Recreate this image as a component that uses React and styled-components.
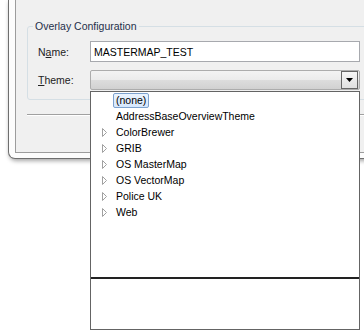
import React from "react";
import styled, { createGlobalStyle } from "styled-components";

const GlobalStyle = createGlobalStyle`
  html, body {
    margin: 0;
    padding: 0;
    background: #ffffff;
    font-family: "Liberation Sans", Arial, sans-serif;
  }
`;

const Page = styled.div`
  position: relative;
  width: 364px;
  height: 333px;
  overflow: hidden;
  background: #ffffff;
`;

const Window = styled.div`
  margin-left: 8px;
  width: 400px;
  border: 1px solid #6e6e6e;
  border-top: none;
  border-radius: 0 0 7px 7px;
  background: #fcfcfc;
  padding: 0 6px 5px 6px;
  box-shadow: 1px 2px 4px rgba(0, 0, 0, 0.35);
`;

const Content = styled.div`
  box-sizing: border-box;
  height: 153px;
  border-left: 1px solid #9c9c9c;
  border-bottom: 1px solid #9c9c9c;
  background: #f0f0f0;
  padding: 20px 0 0 11px;
`;

const GroupBox = styled.fieldset`
  margin: 0;
  width: 380px;
  min-width: 0;
  border: 1px solid #d5dfe5;
  border-radius: 3px;
  padding: 0 0 9px 0;
`;

const Caption = styled.legend`
  margin-left: 5px;
  padding: 0 2px;
  font-size: 10.5px;
  line-height: 13px;
  color: #1e2f4a;
`;

const FieldRow = styled.div`
  display: flex;
  align-items: center;
  padding-left: 10px;
  margin-top: ${(p) => p.$gap}px;
`;

const Label = styled.label`
  width: 52px;
  font-size: 10.5px;
  color: #222222;
`;

const Key = styled.span`
  text-decoration: underline;
`;

const TextBox = styled.div`
  box-sizing: border-box;
  width: 270px;
  height: 21px;
  border: 1px solid #a7a9ae;
  background: #ffffff;
  padding-left: 3px;
  display: flex;
  align-items: center;
  font-size: 10.5px;
  color: #000000;
`;

const Combo = styled.div`
  position: relative;
  box-sizing: border-box;
  width: 270px;
  height: 20px;
  border: 1px solid #acacac;
  border-radius: 2px;
  background: linear-gradient(#f3f3f3 0%, #ebebeb 50%, #dddddd 51%, #d1d1d1 100%);
  display: flex;
  justify-content: flex-end;
`;

const DropButton = styled.div`
  box-sizing: border-box;
  width: 17px;
  height: 18px;
  margin-right: 1px;
  border: 1px solid #666666;
  background: linear-gradient(#f6f6f6, #e0e0e0);
  display: flex;
  align-items: center;
  justify-content: center;
`;

const Separator = styled.div`
  margin-top: 14px;
  width: 400px;
  border-top: 1px solid #a0a0a0;
  border-bottom: 1px solid #ffffff;
`;

const DropList = styled.div`
  position: absolute;
  left: -1px;
  top: 20px;
  box-sizing: border-box;
  width: 270px;
  height: 239px;
  border: 1px solid #646464;
  background: #ffffff;
  display: flex;
  flex-direction: column;
  z-index: 2;
`;

const Tree = styled.div`
  flex: 1;
`;

const Description = styled.div`
  box-sizing: border-box;
  height: 52px;
  border-top: 2px solid #222222;
`;

const TreeRow = styled.div`
  display: flex;
  align-items: center;
  height: 16px;
  padding-left: 10px;
  font-size: 10.5px;
  color: #000000;
`;

const Expander = styled.span`
  width: 12px;
  height: 16px;
  display: flex;
  align-items: center;
  padding-left: 1px;
  box-sizing: border-box;
`;

const ItemText = styled.span`
  box-sizing: border-box;
  height: 15px;
  line-height: 13px;
  padding: 0 2px;
  border: 1px solid ${(p) => (p.$selected ? "#7da2ce" : "transparent")};
  border-radius: 2px;
  background: ${(p) =>
    p.$selected ? "linear-gradient(#ebf4fe, #d5e7fd)" : "transparent"};
`;

const items = [
  { name: "(none)", selected: true },
  { name: "AddressBaseOverviewTheme" },
  { name: "ColorBrewer", folder: true },
  { name: "GRIB", folder: true },
  { name: "OS MasterMap", folder: true },
  { name: "OS VectorMap", folder: true },
  { name: "Police UK", folder: true },
  { name: "Web", folder: true },
];

const Arrow = () => (
  <svg width="7" height="4" viewBox="0 0 7 4">
    <polygon points="0,0 7,0 3.5,4" fill="#000000" />
  </svg>
);

const Triangle = () => (
  <svg width="6" height="9" viewBox="0 0 6 9">
    <polygon
      points="0.5,0.5 4.5,4.5 0.5,8.5"
      fill="#ffffff"
      stroke="#a0a0a0"
      strokeWidth="1"
    />
  </svg>
);

const App = () => {
  return (
    <Page>
      <GlobalStyle />
      <Window>
        <Content>
          <GroupBox>
            <Caption>Overlay Configuration</Caption>
            <FieldRow $gap={8}>
              <Label>
                N<Key>a</Key>me:
              </Label>
              <TextBox>MASTERMAP_TEST</TextBox>
            </FieldRow>
            <FieldRow $gap={8}>
              <Label>
                <Key>T</Key>heme:
              </Label>
              <Combo>
                <DropButton>
                  <Arrow />
                </DropButton>
                <DropList>
                  <Tree>
                    {items.map((item) => (
                      <TreeRow key={item.name}>
                        <Expander>{item.folder && <Triangle />}</Expander>
                        <ItemText $selected={item.selected}>{item.name}</ItemText>
                      </TreeRow>
                    ))}
                  </Tree>
                  <Description />
                </DropList>
              </Combo>
            </FieldRow>
          </GroupBox>
          <Separator />
        </Content>
      </Window>
    </Page>
  );
};

export default App;
